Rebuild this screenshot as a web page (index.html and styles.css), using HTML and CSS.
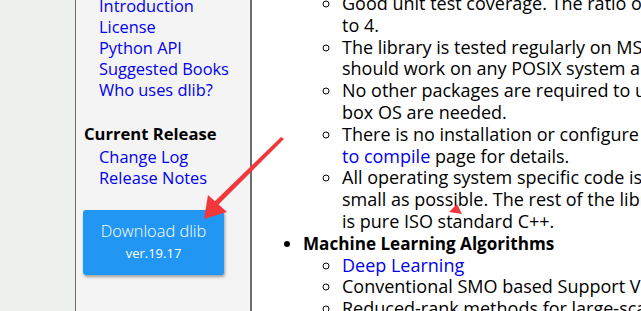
FILE: index.html
```html
<!DOCTYPE html>
<html lang="en">
<head>
    <meta charset="UTF-8">
    <title>dlib C++ Library</title>
    <link rel="stylesheet" href="styles.css">
</head>
<body>
    <div id="page">
        <div id="gutter"></div>
        <div id="sidebar">
            <ul class="links top">
                <li><a href="#">Introduction</a></li>
                <li><a href="#">License</a></li>
                <li><a href="#">Python API</a></li>
                <li><a href="#">Suggested Books</a></li>
                <li><a href="#">Who uses dlib?</a></li>
            </ul>
            <h3>Current Release</h3>
            <ul class="links">
                <li><a href="#">Change Log</a></li>
                <li><a href="#">Release Notes</a></li>
            </ul>
            <a class="download" href="#">
                <span class="dl-title">Download dlib</span>
                <span class="dl-ver">ver.19.17</span>
            </a>
        </div>
        <div id="main">
            <ul class="features">
                <li>
                    <ul class="sub">
                        <li>Good unit test coverage. The ratio of test code to library code is about 1<br>to 4.</li>
                        <li>The library is tested regularly on MS Windows, Linux, and Mac OS X systems. However, it<br>should work on any POSIX system and has been used on Solaris, HPUX, and the BSDs.</li>
                        <li>No other packages are required to use the library. Only APIs that are provided by an out of the<br>box OS are needed.</li>
                        <li>There is no installation or configure step needed before you can use the library. See the <a href="#">How</a><br><a href="#">to compile</a> page for details.</li>
                        <li>All operating system specific code is isolated inside the OS abstraction layers which are kept as<br>small as possible. The rest of the library is either layered on top of the OS abstraction layers or<br>is pure ISO standard C++.</li>
                    </ul>
                </li>
                <li class="head"><span class="head-text">Machine Learning Algorithms</span>
                    <ul class="sub">
                        <li><a href="#">Deep Learning</a></li>
                        <li>Conventional SMO based Support Vector Machines for classification and regression</li>
                        <li>Reduced-rank methods for large-scale classification and regression</li>
                    </ul>
                </li>
            </ul>
        </div>
        <svg class="arrow" width="641" height="311" viewBox="0 0 641 311">
            <polygon points="284,139 281,137 212,204 215,208" fill="#f2373a"/>
            <polygon points="204,219 208,195 227,212" fill="#f2373a"/>
            <polygon points="457,204 462,214 449,212" fill="#f2373a"/>
        </svg>
    </div>
</body>
</html>
```
FILE: styles.css
```css
*{
    margin: 0;
    padding: 0;
    list-style: none;
}
body{
    font-family: "Open Sans", "Noto Sans", sans-serif;
    background: #fff;
    overflow: hidden;
}
a{
    color: #0000ee;
    text-decoration: none;
}
#page{
    display: flex;
    height: 311px;
    position: relative;
    overflow: hidden;
}
#gutter{
    width: 75px;
    background: #edf1ee;
    flex: none;
}
#sidebar{
    width: 166px;
    flex: none;
    background: #f4f4f4;
    border-left: 1px solid #6e6e6e;
    border-right: 2px solid #6e6e6e;
    padding-left: 8px;
    font-size: 16.4px;
}
#sidebar .links li{
    line-height: 21px;
    padding-left: 15px;
}
#sidebar .top{
    margin-top: -5px;
}
#sidebar h3{
    font-size: 16.6px;
    font-weight: bold;
    margin-top: 22px;
    line-height: 24px;
}
.download{
    display: flex;
    flex-direction: column;
    align-items: center;
    width: 141px;
    height: 65px;
    margin-top: 22px;
    margin-left: -1px;
    background: #2196f3;
    color: #fff;
    border-radius: 3px;
    box-shadow: 1px 2px 3px rgba(0,0,0,0.35);
    padding-top: 10px;
    box-sizing: border-box;
}
.dl-title{
    font-size: 16.4px;
    font-weight: 300;
    line-height: 22px;
}
.dl-ver{
    font-size: 13px;
    line-height: 22px;
}
#main{
    flex: 1;
    min-width: 0;
    font-size: 18px;
    color: #000;
    white-space: nowrap;
    overflow: hidden;
}
.features{
    margin-top: -7px;
    padding-left: 51px;
}
.features > li.head{
    list-style: disc;
    font-weight: bold;
    line-height: 21.8px;
}
.head-text{
    font-size: 17.1px;
}
.sub{
    padding-left: 39px;
    font-weight: normal;
}
.sub li{
    list-style: circle;
    line-height: 21.8px;
}
.arrow{
    position: absolute;
    left: 0;
    top: 0;
    pointer-events: none;
}
```
